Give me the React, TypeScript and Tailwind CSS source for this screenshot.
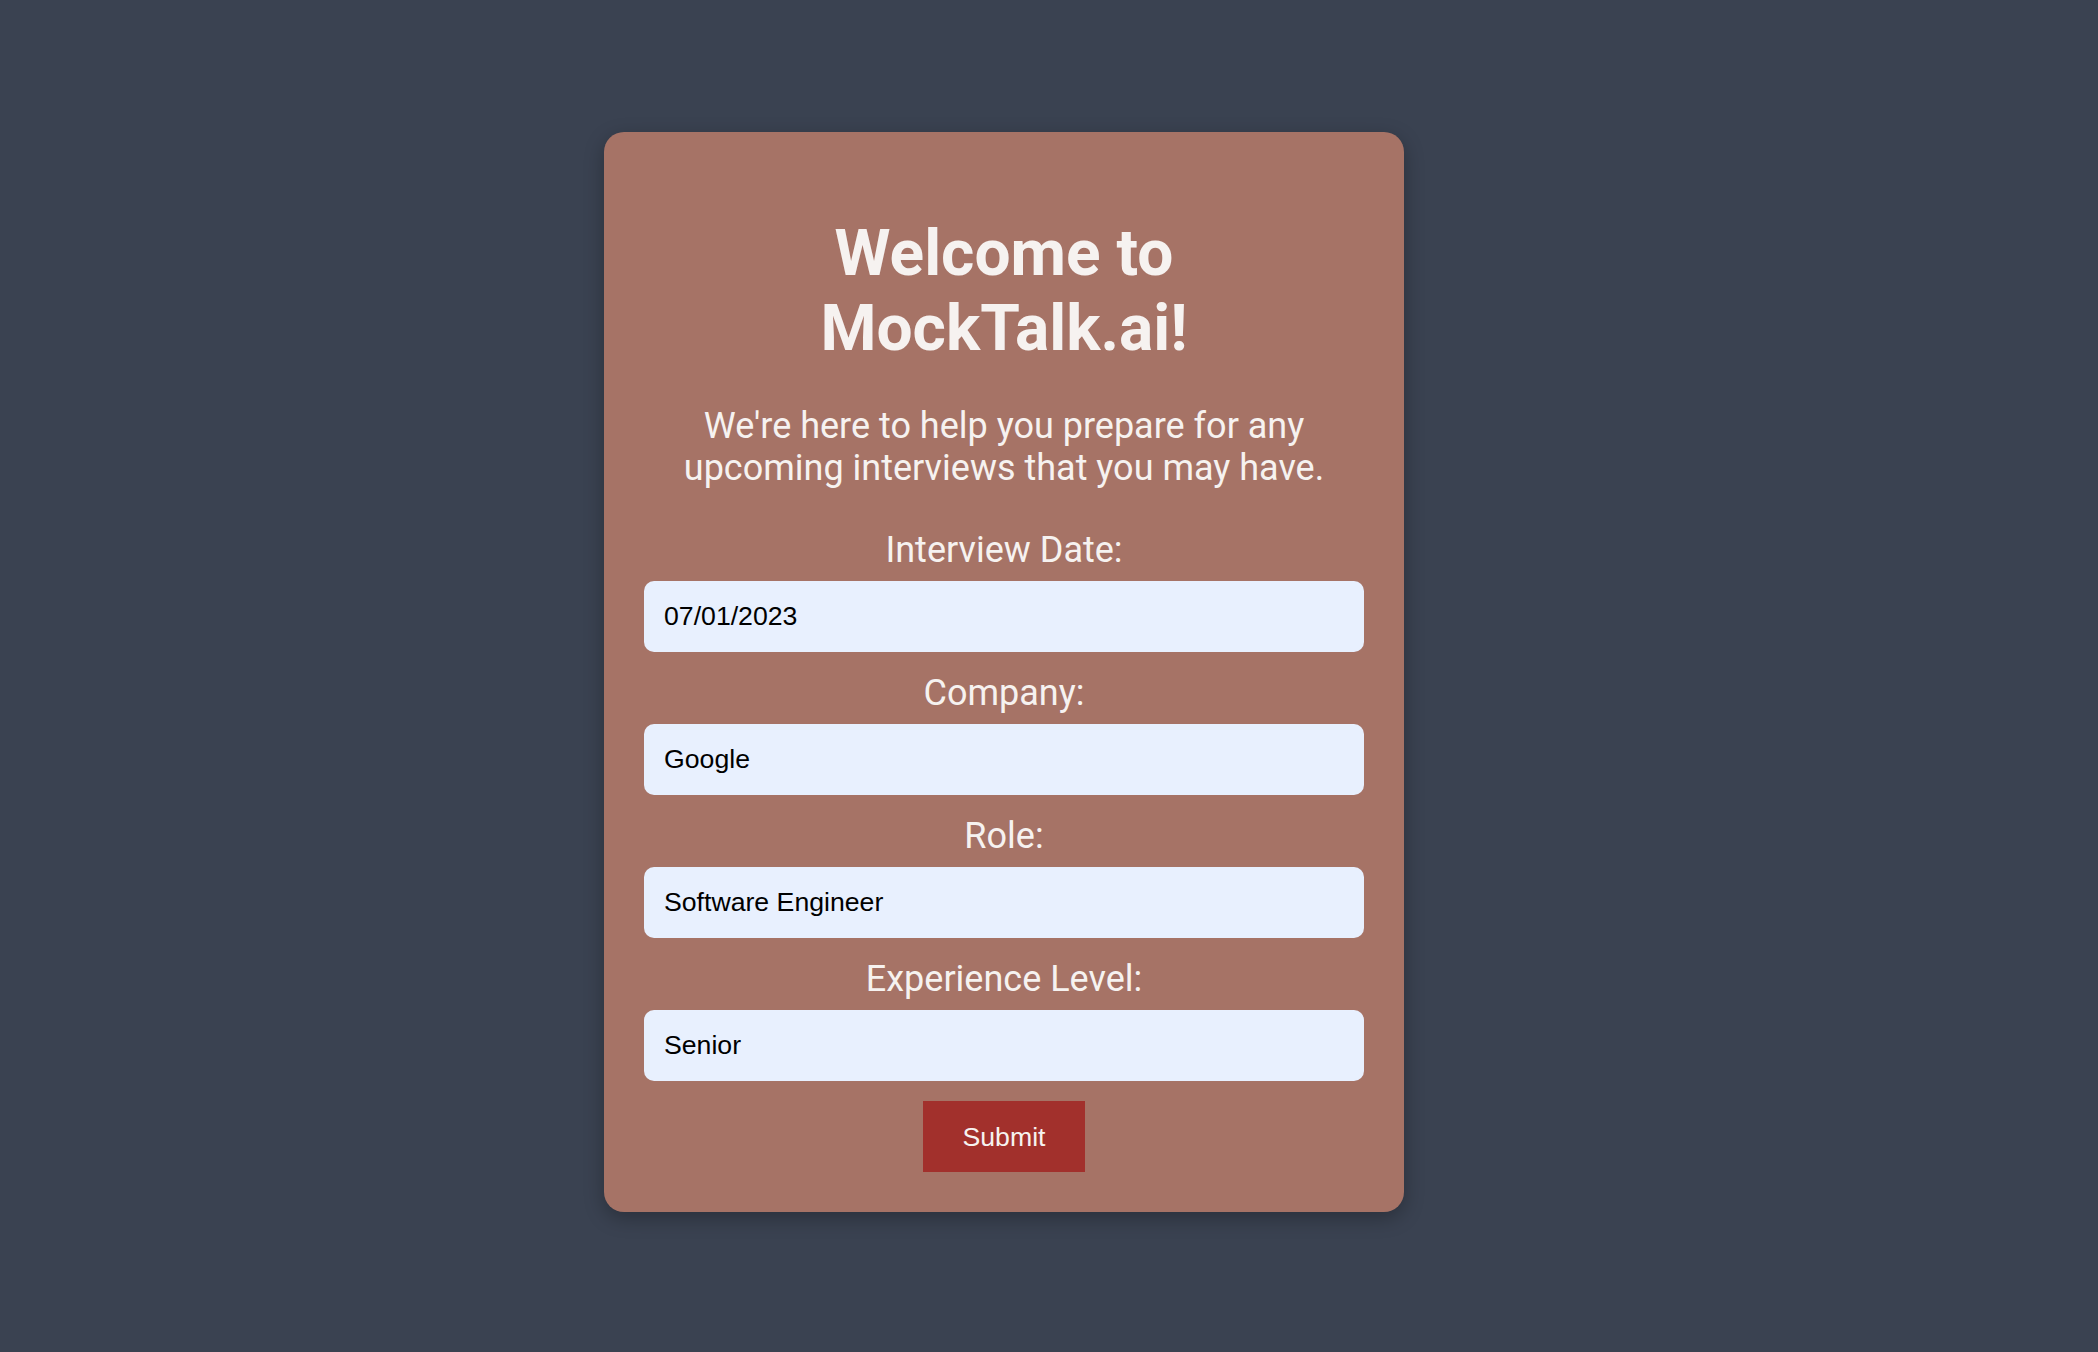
import React from "react";

const fields = [
  { label: "Interview Date:", value: "07/01/2023" },
  { label: "Company:", value: "Google" },
  { label: "Role:", value: "Software Engineer" },
  { label: "Experience Level:", value: "Senior" },
];

export default function App() {
  return (
    <div className="flex min-h-screen items-start bg-[#3a4251] pl-[604px] pt-[132px] font-['Roboto',sans-serif]">
      <div className="w-[800px] rounded-[20px] bg-[#a67366] p-[40px] text-center text-[#f6f2f0] shadow-[0_6px_20px_rgba(0,0,0,0.28)]">
        <h1 className="mt-[44px] mb-[39px] text-[64px] font-bold leading-[75px]">
          Welcome to
          <br />
          MockTalk.ai!
        </h1>
        <p className="mb-[40px] text-[36px] leading-[42px]">
          We're here to help you prepare for any upcoming interviews that you may have.
        </p>
        <form className="flex flex-col items-center" onSubmit={(e) => e.preventDefault()}>
          {fields.map((f) => (
            <div key={f.label} className="flex w-full flex-col items-center">
              <label className="mb-[10px] text-[36px] leading-[42px]">{f.label}</label>
              <input
                defaultValue={f.value}
                className="mb-[20px] h-[71px] w-full rounded-[10px] bg-[#e8f0fe] px-[20px] text-left font-['Liberation_Sans',Arial,sans-serif] text-[26.67px] text-black outline-none"
              />
            </div>
          ))}
          <button
            type="submit"
            className="h-[71px] bg-[#a2302c] px-[40px] font-['Liberation_Sans',Arial,sans-serif] text-[26.67px] text-[#f6f2f0]"
          >
            Submit
          </button>
        </form>
      </div>
    </div>
  );
}
